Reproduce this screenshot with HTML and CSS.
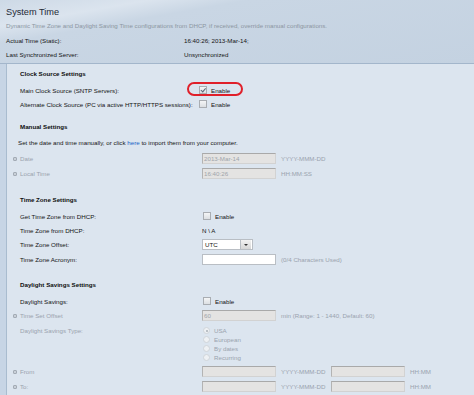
FILE: index.html
```html
<!DOCTYPE html>
<html lang="en">
<head>
    <meta charset="UTF-8">
    <meta name="viewport" content="width=device-width, initial-scale=1.0">
    <title>System Time</title>
    <link rel="stylesheet" href="styles.css">
</head>
<body>
    <div class="header">
        <h1>System Time</h1>
        <p class="desc">Dynamic Time Zone and Daylight Saving Time configurations from DHCP, if received, override manual configurations.</p>
        <div class="info-row"><span class="info-label">Actual Time (Static):</span><span>16:40:26; 2013-Mar-14;</span></div>
        <div class="info-row"><span class="info-label">Last Synchronized Server:</span><span>Unsynchronized</span></div>
    </div>

    <div class="panel">
        <div class="section clock">
            <h2>Clock Source Settings</h2>
            <div class="row">
                <span class="label">Main Clock Source (SNTP Servers):</span>
                <span class="control highlight-wrap">
                    <span class="check checked"></span><span>Enable</span>
                    <span class="highlight"></span>
                </span>
            </div>
            <div class="row">
                <span class="label">Alternate Clock Source (PC via active HTTP/HTTPS sessions):</span>
                <span class="control"><span class="check"></span><span>Enable</span></span>
            </div>
        </div>

        <div class="section manual">
            <h2>Manual Settings</h2>
            <p class="note">Set the date and time manually, or click <a href="#">here</a> to import them from your computer.</p>
            <div class="row input-row">
                <span class="label muted"><span class="bullet"></span>Date</span>
                <span class="control"><span class="field disabled">2013-Mar-14</span><span class="hint">YYYY-MMM-DD</span></span>
            </div>
            <div class="row input-row">
                <span class="label muted"><span class="bullet"></span>Local Time</span>
                <span class="control"><span class="field disabled">16:40:26</span><span class="hint">HH:MM:SS</span></span>
            </div>
        </div>

        <div class="section zone">
            <h2>Time Zone Settings</h2>
            <div class="row">
                <span class="label">Get Time Zone from DHCP:</span>
                <span class="control"><span class="check"></span><span>Enable</span></span>
            </div>
            <div class="row">
                <span class="label">Time Zone from DHCP:</span>
                <span class="control">N \ A</span>
            </div>
            <div class="row input-row">
                <span class="label">Time Zone Offset:</span>
                <span class="control">
                    <span class="select"><span class="select-value">UTC</span><span class="select-btn"><span class="arrow"></span></span></span>
                </span>
            </div>
            <div class="row input-row">
                <span class="label">Time Zone Acronym:</span>
                <span class="control"><span class="field"></span><span class="hint">(0/4 Characters Used)</span></span>
            </div>
        </div>

        <div class="section daylight">
            <h2>Daylight Savings Settings</h2>
            <div class="row">
                <span class="label">Daylight Savings:</span>
                <span class="control"><span class="check"></span><span>Enable</span></span>
            </div>
            <div class="row input-row">
                <span class="label muted"><span class="bullet"></span>Time Set Offset</span>
                <span class="control"><span class="field disabled">60</span><span class="hint">min (Range: 1 - 1440, Default: 60)</span></span>
            </div>
            <div class="row radio-row">
                <span class="label muted">Daylight Savings Type:</span>
                <span class="radios">
                    <span class="radio-item"><span class="radio on"></span>USA</span>
                    <span class="radio-item"><span class="radio"></span>European</span>
                    <span class="radio-item"><span class="radio"></span>By dates</span>
                    <span class="radio-item"><span class="radio"></span>Recurring</span>
                </span>
            </div>
            <div class="row input-row">
                <span class="label muted"><span class="bullet"></span>From</span>
                <span class="control">
                    <span class="field disabled"></span><span class="hint wide">YYYY-MMM-DD</span>
                    <span class="field disabled"></span><span class="hint">HH:MM</span>
                </span>
            </div>
            <div class="row input-row">
                <span class="label muted"><span class="bullet"></span>To:</span>
                <span class="control">
                    <span class="field disabled"></span><span class="hint wide">YYYY-MMM-DD</span>
                    <span class="field disabled"></span><span class="hint">HH:MM</span>
                </span>
            </div>
        </div>
    </div>
</body>
</html>
```

FILE: styles.css
```css
body {
    margin: 0;
    font-family: "Liberation Sans", Arial, sans-serif;
    font-size: 6.2px;
    color: #141414;
    background-color: #c7d5e5;
    overflow: hidden;
}

.header {
    padding: 6px 0 1px 6px;
    border-bottom: 1px solid #a3b6cb;
    background: linear-gradient(170deg, #cdd9e6 0%, #dbe4ee 18%, #c9d6e4 30%, #c4d2e1 100%);
}

.header h1 {
    margin: 0 0 3px 0;
    font-size: 9.2px;
    font-weight: normal;
    line-height: 12px;
    color: #1f2a36;
}

.desc {
    margin: 0 0 3px 0;
    line-height: 10px;
    color: #8c96a2;
}

.info-row {
    display: flex;
    height: 14px;
    line-height: 14px;
}

.info-label {
    width: 178px;
}

.panel {
    margin-left: 6px;
    padding: 3px 0 0 13px;
    border-left: 1px solid #a9bccf;
    background-color: #dce5ef;
    height: 340px;
}

.section h2 {
    margin: 0 0 2px 0;
    font-size: 6.2px;
    line-height: 14px;
    height: 14px;
    color: #0e0e0e;
}

.manual { margin-top: 9px; }
.zone { margin-top: 12px; }
.daylight { margin-top: 11px; }

.row {
    display: flex;
    align-items: center;
    height: 14px;
}

.input-row {
    height: 15px;
}

.label {
    position: relative;
    width: 182px;
    flex-shrink: 0;
}

.clock .label {
    width: 178px;
}

.muted {
    color: #9aa3ae;
}

.bullet {
    position: absolute;
    left: -7px;
    top: 50%;
    width: 2px;
    height: 2px;
    margin-top: -2px;
    border: 1px solid #a3abb5;
    border-radius: 1px;
    background-color: #c9d0d8;
}

.note {
    margin: 0 0 1px -2px;
    line-height: 14px;
    height: 14px;
}

.note a {
    color: #1b62c6;
    text-decoration: none;
}

.control {
    display: flex;
    align-items: center;
}

.check {
    width: 6px;
    height: 6px;
    margin: 0 4px 0 1px;
    border: 1px solid #a9adb2;
    background: linear-gradient(#f4f5f6, #dcdfe2);
    position: relative;
}

.check.checked::after {
    content: "";
    position: absolute;
    left: 2px;
    top: 0px;
    width: 1.5px;
    height: 3.5px;
    border: solid #5a6676;
    border-width: 0 1px 1px 0;
    transform: rotate(40deg);
}

.highlight-wrap {
    position: relative;
}

.highlight {
    position: absolute;
    left: -11px;
    top: -4px;
    width: 52px;
    height: 10px;
    border: 2px solid #e0202a;
    border-radius: 7px;
}

.field {
    width: 71px;
    height: 9px;
    line-height: 9px;
    padding-left: 1px;
    border: 1px solid #b9bec4;
    background-color: #ffffff;
    color: #9ea4ab;
}

.field.disabled {
    background-color: #e4e3e2;
    border-color: #d2d2d2;
    border-top-color: #a9a9a9;
    border-left-color: #b3b3b3;
}

.hint {
    margin-left: 5px;
    color: #9aa3ae;
}

.hint.wide {
    width: 50px;
}

.select {
    display: flex;
    width: 49px;
    height: 9px;
    border: 1px solid #b9bec4;
    background-color: #ffffff;
}

.select-value {
    flex: 1;
    line-height: 9px;
    padding-left: 2px;
}

.select-btn {
    width: 10px;
    margin: 0 1px 0 0;
    display: flex;
    align-items: center;
    justify-content: center;
    border-left: 1px solid #b9bec4;
    background: linear-gradient(#f2f2f2, #d6d6d6);
}

.arrow {
    width: 0;
    height: 0;
    border-left: 2px solid transparent;
    border-right: 2px solid transparent;
    border-top: 2px solid #333;
}

.radio-row {
    height: auto;
    align-items: flex-start;
    margin-top: 3px;
    margin-bottom: 2px;
}

.radio-row .label {
    line-height: 9px;
}

.radios {
    display: flex;
    flex-direction: column;
}

.radio-item {
    display: flex;
    align-items: center;
    height: 9px;
    color: #9aa3ae;
}

.radio {
    width: 5px;
    height: 5px;
    margin: 0 4px 0 1px;
    border: 1px solid #d0d5da;
    border-radius: 50%;
    background-color: #eef1f4;
    position: relative;
}

.radio.on::after {
    content: "";
    position: absolute;
    left: 1.5px;
    top: 1.5px;
    width: 2px;
    height: 2px;
    border-radius: 50%;
    background-color: #a8afb7;
}
```
